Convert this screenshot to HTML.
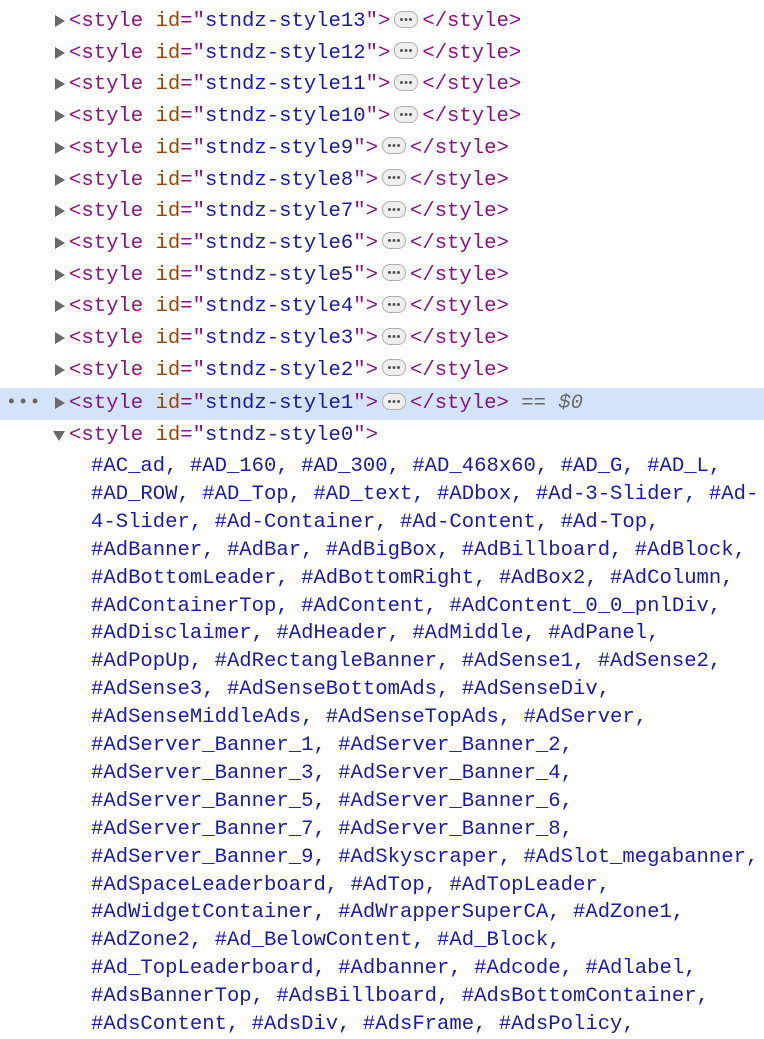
<!DOCTYPE html>
<html><head><meta charset="utf-8"><style>
body{margin:0;width:764px;height:1024px;overflow:hidden;background:#fff;font-family:"Liberation Mono","DejaVu Sans Mono",monospace;font-size:20.6px;}
.r{position:absolute;left:0;width:764px;height:31.7px;line-height:31.7px;white-space:pre;}
.r .t{position:absolute;left:69px;top:0}
.tg{color:#881280}.an{color:#994500}.av{color:#1a1aa6}
.tri{position:absolute;left:55px;top:9px;width:0;height:0;border-top:6px solid transparent;border-bottom:6px solid transparent;border-left:10px solid #6a6a6a}
.down{position:absolute;left:53px;top:11px;width:0;height:0;border-left:6px solid transparent;border-right:6px solid transparent;border-top:10px solid #6a6a6a}
.e{display:inline-block;width:22px;height:15px;border:1px solid #b0b0b0;border-radius:8px;background:#eeeeee;vertical-align:middle;margin:0 4px 3px 4px;position:relative}
.e:after{content:"";position:absolute;left:5px;top:6px;width:3px;height:3px;background:#555;border-radius:50%;box-shadow:4.5px 0 #555,9px 0 #555}
.sel{background:#d4e4f8}
.dots{position:absolute;left:6px;top:0;color:#666;letter-spacing:1px;font-size:18px}
.c{position:absolute;left:91px;height:27.9px;line-height:27.9px;color:#1a1aa6;white-space:pre}
.eq{color:#6a6a6a;font-style:italic}
</style></head><body>
<div class="r" style="top:6px"><div class="tri"></div><span class="t"><span class="tg">&lt;style </span><span class="an">id</span><span class="tg">="</span><span class="av">stndz-style13</span><span class="tg">"&gt;</span><span class="e"></span><span class="tg">&lt;/style&gt;</span></span></div>
<div class="r" style="top:37.7px"><div class="tri"></div><span class="t"><span class="tg">&lt;style </span><span class="an">id</span><span class="tg">="</span><span class="av">stndz-style12</span><span class="tg">"&gt;</span><span class="e"></span><span class="tg">&lt;/style&gt;</span></span></div>
<div class="r" style="top:69.4px"><div class="tri"></div><span class="t"><span class="tg">&lt;style </span><span class="an">id</span><span class="tg">="</span><span class="av">stndz-style11</span><span class="tg">"&gt;</span><span class="e"></span><span class="tg">&lt;/style&gt;</span></span></div>
<div class="r" style="top:101.1px"><div class="tri"></div><span class="t"><span class="tg">&lt;style </span><span class="an">id</span><span class="tg">="</span><span class="av">stndz-style10</span><span class="tg">"&gt;</span><span class="e"></span><span class="tg">&lt;/style&gt;</span></span></div>
<div class="r" style="top:132.8px"><div class="tri"></div><span class="t"><span class="tg">&lt;style </span><span class="an">id</span><span class="tg">="</span><span class="av">stndz-style9</span><span class="tg">"&gt;</span><span class="e"></span><span class="tg">&lt;/style&gt;</span></span></div>
<div class="r" style="top:164.5px"><div class="tri"></div><span class="t"><span class="tg">&lt;style </span><span class="an">id</span><span class="tg">="</span><span class="av">stndz-style8</span><span class="tg">"&gt;</span><span class="e"></span><span class="tg">&lt;/style&gt;</span></span></div>
<div class="r" style="top:196.2px"><div class="tri"></div><span class="t"><span class="tg">&lt;style </span><span class="an">id</span><span class="tg">="</span><span class="av">stndz-style7</span><span class="tg">"&gt;</span><span class="e"></span><span class="tg">&lt;/style&gt;</span></span></div>
<div class="r" style="top:227.9px"><div class="tri"></div><span class="t"><span class="tg">&lt;style </span><span class="an">id</span><span class="tg">="</span><span class="av">stndz-style6</span><span class="tg">"&gt;</span><span class="e"></span><span class="tg">&lt;/style&gt;</span></span></div>
<div class="r" style="top:259.6px"><div class="tri"></div><span class="t"><span class="tg">&lt;style </span><span class="an">id</span><span class="tg">="</span><span class="av">stndz-style5</span><span class="tg">"&gt;</span><span class="e"></span><span class="tg">&lt;/style&gt;</span></span></div>
<div class="r" style="top:291.3px"><div class="tri"></div><span class="t"><span class="tg">&lt;style </span><span class="an">id</span><span class="tg">="</span><span class="av">stndz-style4</span><span class="tg">"&gt;</span><span class="e"></span><span class="tg">&lt;/style&gt;</span></span></div>
<div class="r" style="top:323px"><div class="tri"></div><span class="t"><span class="tg">&lt;style </span><span class="an">id</span><span class="tg">="</span><span class="av">stndz-style3</span><span class="tg">"&gt;</span><span class="e"></span><span class="tg">&lt;/style&gt;</span></span></div>
<div class="r" style="top:354.7px"><div class="tri"></div><span class="t"><span class="tg">&lt;style </span><span class="an">id</span><span class="tg">="</span><span class="av">stndz-style2</span><span class="tg">"&gt;</span><span class="e"></span><span class="tg">&lt;/style&gt;</span></span></div>
<div class="r sel" style="top:388px"><span class="dots">•••</span><div class="tri"></div><span class="t"><span class="tg">&lt;style </span><span class="an">id</span><span class="tg">="</span><span class="av">stndz-style1</span><span class="tg">"&gt;</span><span class="e"></span><span class="tg">&lt;/style&gt;</span> <span class="eq">== $0</span></span></div>
<div class="r" style="top:419.5px"><div class="down"></div><span class="t"><span class="tg">&lt;style </span><span class="an">id</span><span class="tg">="</span><span class="av">stndz-style0</span><span class="tg">"&gt;</span></span></div>
<div class="c" style="top:453px">#AC_ad, #AD_160, #AD_300, #AD_468x60, #AD_G, #AD_L,</div>
<div class="c" style="top:480.9px">#AD_ROW, #AD_Top, #AD_text, #ADbox, #Ad-3-Slider, #Ad-</div>
<div class="c" style="top:508.8px">4-Slider, #Ad-Container, #Ad-Content, #Ad-Top,</div>
<div class="c" style="top:536.7px">#AdBanner, #AdBar, #AdBigBox, #AdBillboard, #AdBlock,</div>
<div class="c" style="top:564.6px">#AdBottomLeader, #AdBottomRight, #AdBox2, #AdColumn,</div>
<div class="c" style="top:592.5px">#AdContainerTop, #AdContent, #AdContent_0_0_pnlDiv,</div>
<div class="c" style="top:620.4px">#AdDisclaimer, #AdHeader, #AdMiddle, #AdPanel,</div>
<div class="c" style="top:648.3px">#AdPopUp, #AdRectangleBanner, #AdSense1, #AdSense2,</div>
<div class="c" style="top:676.2px">#AdSense3, #AdSenseBottomAds, #AdSenseDiv,</div>
<div class="c" style="top:704.1px">#AdSenseMiddleAds, #AdSenseTopAds, #AdServer,</div>
<div class="c" style="top:732px">#AdServer_Banner_1, #AdServer_Banner_2,</div>
<div class="c" style="top:759.9px">#AdServer_Banner_3, #AdServer_Banner_4,</div>
<div class="c" style="top:787.8px">#AdServer_Banner_5, #AdServer_Banner_6,</div>
<div class="c" style="top:815.7px">#AdServer_Banner_7, #AdServer_Banner_8,</div>
<div class="c" style="top:843.6px">#AdServer_Banner_9, #AdSkyscraper, #AdSlot_megabanner,</div>
<div class="c" style="top:871.5px">#AdSpaceLeaderboard, #AdTop, #AdTopLeader,</div>
<div class="c" style="top:899.4px">#AdWidgetContainer, #AdWrapperSuperCA, #AdZone1,</div>
<div class="c" style="top:927.3px">#AdZone2, #Ad_BelowContent, #Ad_Block,</div>
<div class="c" style="top:955.2px">#Ad_TopLeaderboard, #Adbanner, #Adcode, #Adlabel,</div>
<div class="c" style="top:983.1px">#AdsBannerTop, #AdsBillboard, #AdsBottomContainer,</div>
<div class="c" style="top:1011px">#AdsContent, #AdsDiv, #AdsFrame, #AdsPolicy,</div>
</body></html>
